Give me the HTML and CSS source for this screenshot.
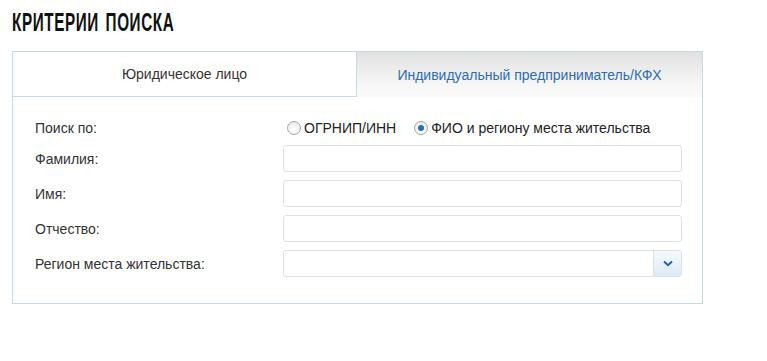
FILE: index.html
```html
<!DOCTYPE html>
<html lang="ru">
<head>
<meta charset="utf-8">
<title>Критерии поиска</title>
<link rel="stylesheet" href="styles.css">
</head>
<body>
<h1 class="title"><span class="title-text">КРИТЕРИИ ПОИСКА</span></h1>
<div class="panel">
  <div class="tabs">
    <div class="tab tab-plain">Юридическое лицо</div>
    <div class="tab tab-active">Индивидуальный предприниматель/КФХ</div>
  </div>
  <div class="content">
    <div class="row row-radio">
      <div class="label">Поиск по:</div>
      <div class="radios">
        <label class="radio"><span class="dot"></span>ОГРНИП/ИНН</label>
        <label class="radio radio-on"><span class="dot"></span>ФИО и региону места жительства</label>
      </div>
    </div>
    <div class="row">
      <div class="label">Фамилия:</div>
      <div class="field"></div>
    </div>
    <div class="row">
      <div class="label">Имя:</div>
      <div class="field"></div>
    </div>
    <div class="row">
      <div class="label">Отчество:</div>
      <div class="field"></div>
    </div>
    <div class="row">
      <div class="label">Регион места жительства:</div>
      <div class="field field-select">
        <span class="select-btn">
          <svg width="10" height="7" viewBox="0 0 10 7"><path d="M1 1.5 L5 5.2 L9 1.5" fill="none" stroke="#1d63ae" stroke-width="2"/></svg>
        </span>
      </div>
    </div>
  </div>
</div>
</body>
</html>
```

FILE: styles.css
```css
html, body {
  margin: 0;
  padding: 0;
  background: #fff;
}
body {
  font-family: "Liberation Sans", Arial, sans-serif;
  font-size: 14px;
  color: #333;
}
.title {
  margin: 0;
  padding: 8px 0 0 12px;
  height: 51px;
  box-sizing: border-box;
  font-family: "Liberation Sans", Arial, sans-serif;
  font-weight: bold;
  font-size: 25px;
  line-height: 28px;
  color: #111;
}
.title-text {
  display: inline-block;
  letter-spacing: 1px;
  word-spacing: 3px;
  transform: scaleX(0.61);
  transform-origin: 0 50%;
  white-space: nowrap;
}
.panel {
  margin-left: 12px;
  width: 691px;
  height: 253px;
  box-sizing: border-box;
  border: 1px solid #c3dbe1;
}
.tabs {
  display: grid;
  grid-template-columns: 344px 1fr;
  height: 45px;
}
.tab {
  display: flex;
  align-items: center;
  justify-content: center;
  font-size: 14px;
}
.tab-plain {
  background: #fff;
  border-right: 1px solid #c3dbe1;
  border-bottom: 1px solid #c3dbe1;
  color: #333;
}
.tab-active {
  background: linear-gradient(#e1e1e1, #f6f6f6 70%, #fbfbfb);
  color: #2b6cb3;
}
.content {
  padding: 20px 20px 0 22px;
}
.row {
  display: flex;
  align-items: center;
  height: 27px;
  margin-bottom: 8px;
}
.row-radio {
  height: 22px;
  margin-bottom: 6px;
}
.label {
  width: 248px;
  flex: none;
  color: #333;
}
.field {
  flex: 1;
  height: 27px;
  box-sizing: border-box;
  border: 1px solid #dbe2e6;
  border-radius: 3px;
  background: #fff;
  display: flex;
  justify-content: flex-end;
}
.select-btn {
  width: 27px;
  height: 25px;
  border-left: 1px solid #dbe2e6;
  border-radius: 0 3px 3px 0;
  background: linear-gradient(#f7fafd, #dde9f5);
  display: flex;
  align-items: center;
  justify-content: center;
}
.radios {
  display: flex;
  align-items: center;
  padding-left: 4px;
  gap: 18px;
}
.radio {
  display: flex;
  align-items: center;
  color: #222;
}
.dot {
  width: 12px;
  height: 12px;
  border-radius: 50%;
  border: 1px solid #a5a5a5;
  background: radial-gradient(circle at 50% 70%, #fff, #e6e6e6);
  margin-right: 3px;
  position: relative;
}
.radio-on .dot {
  border-color: #9aa6b2;
}
.radio-on .dot::after {
  content: "";
  position: absolute;
  left: 3px;
  top: 3px;
  width: 6px;
  height: 6px;
  border-radius: 50%;
  background: #1f6fc5;
}
```
